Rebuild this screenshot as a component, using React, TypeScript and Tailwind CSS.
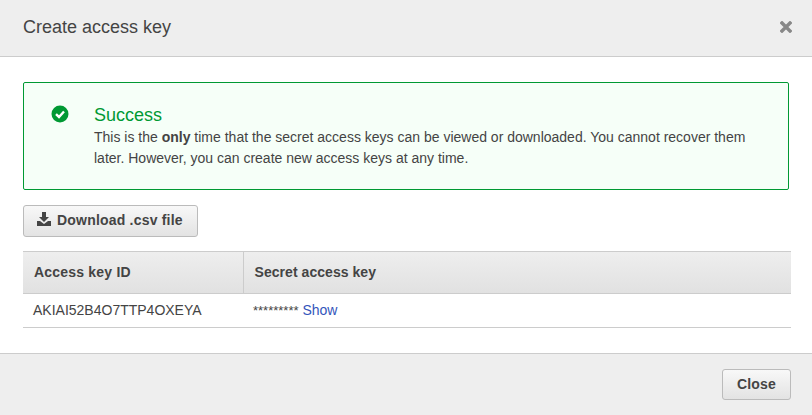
export default function App() {
  return (
    <div className="w-[812px] h-[415px] overflow-hidden bg-white flex flex-col font-['Liberation_Sans',Arial,sans-serif] text-[#444444]">
      <header className="h-[57px] shrink-0 bg-[#eeeeee] border-b border-[#cccccc] flex items-center justify-between pl-[23px] pr-[20px]">
        <h1 className="text-[18px] leading-[24px] text-[#444444] relative top-[-1px]">Create access key</h1>
        <svg width="12" height="12" viewBox="0 0 12 12" className="relative top-[-1px]">
          <path d="M2 2 L10 10 M10 2 L2 10" stroke="#888888" strokeWidth="3.4" strokeLinecap="square" fill="none" />
        </svg>
      </header>
      <main className="flex-1 px-[23px] pt-[25px] flex flex-col">
        <section className="h-[108px] border border-[#009933] rounded-[2px] bg-[#f6fff8] flex pl-[27px] pt-[22px] pr-[20px]">
          <svg width="18" height="18" viewBox="0 0 18 18" className="shrink-0">
            <circle cx="9" cy="9" r="8.5" fill="#009933" />
            <path d="M5 9.2 L8 12 L13 6.5" stroke="#ffffff" strokeWidth="2.4" fill="none" />
          </svg>
          <div className="ml-[25px]">
            <div className="text-[18px] leading-[20px] text-[#009933]">Success</div>
            <p className="text-[14px] leading-[21px] text-[#444444] w-[680px] mt-[2px]">
              This is the <b>only</b> time that the secret access keys can be viewed or downloaded. You cannot recover them later. However, you can create new access keys at any time.
            </p>
          </div>
        </section>
        <button className="mt-[15px] w-[175px] h-[32px] shrink-0 rounded-[3px] border border-[#bbbbbb] bg-gradient-to-b from-[#f8f8f8] to-[#e3e3e3] flex items-center pl-[12px] text-[14px] font-bold text-[#444444] tracking-[0.2px]">
          <svg width="16" height="14" viewBox="0 0 16 14" className="mr-[5px] relative top-[-2px]">
            <path d="M6 0 H10 V5 H13 L8 10 L3 5 H6 Z" fill="#444444" />
            <path d="M1 9 H4 L8 12 L12 9 H15 V14 H1 Z" fill="#444444" />
          </svg>
          <span className="relative top-[-1px]">Download .csv file</span>
        </button>
        <table className="mt-[14px] w-[768px] table-fixed border-collapse text-[14px]">
          <thead>
            <tr className="h-[42px] bg-gradient-to-b from-[#eeeeee] to-[#e1e1e1]">
              <th className="w-[220px] text-left font-bold pl-[11px] border border-l-0 border-[#cccccc] tracking-[0.2px]">Access key ID</th>
              <th className="text-left font-bold pl-[11px] border border-r-0 border-[#cccccc] tracking-[0.05px]">Secret access key</th>
            </tr>
          </thead>
          <tbody>
            <tr className="h-[34px] border-b border-[#cccccc]">
              <td className="pl-[10px]">AKIAI52B4O7TTP4OXEYA</td>
              <td className="pl-[10px]"><span className="text-[13px]">*********</span> <a className="text-[#3355bb]">Show</a></td>
            </tr>
          </tbody>
        </table>
      </main>
      <footer className="h-[62px] shrink-0 bg-[#eeeeee] border-t border-[#cccccc] flex items-start justify-end pt-[15px] pr-[21px]">
        <button className="w-[69px] h-[31px] rounded-[3px] border border-[#bbbbbb] bg-gradient-to-b from-[#f8f8f8] to-[#e3e3e3] text-[14px] font-bold text-[#444444] tracking-[0.2px]">Close</button>
      </footer>
    </div>
  );
}
